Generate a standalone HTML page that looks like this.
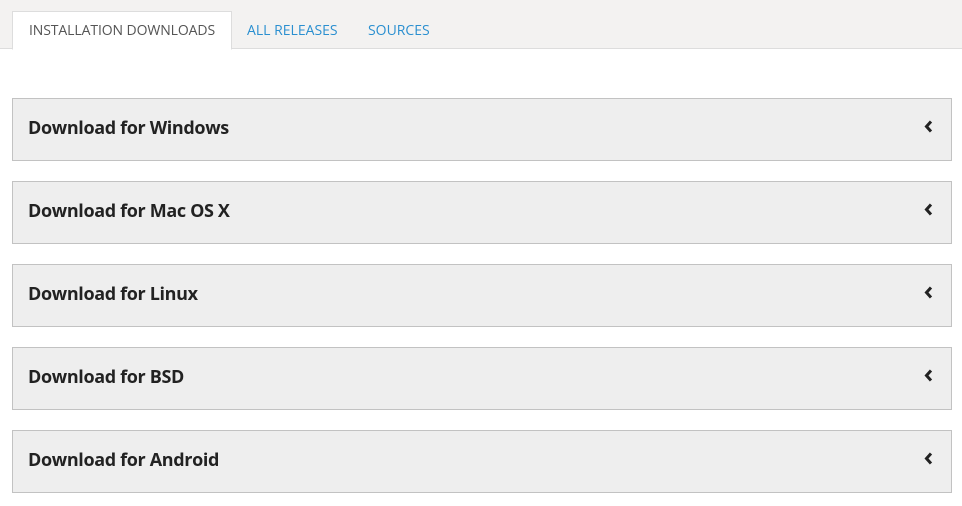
<!DOCTYPE html>
<html><head><style>
body{margin:0;background:#fff;font-family:"Open Sans","Liberation Sans",sans-serif;width:962px;height:506px;overflow:hidden}
.tabs{position:absolute;left:0;top:0;width:962px;height:48px;background:#f3f2f1;border-bottom:1px solid #ddd}
.tab{position:absolute;top:11px;height:37px;line-height:38px;font-size:14px;color:#2a8fd0}
.tab.active{left:12px;width:218px;background:#fff;border:1px solid #ddd;border-bottom:1px solid #fff;color:#555;text-align:center;top:11px;height:37px;letter-spacing:-0.1px}
.p{position:absolute;left:12px;width:938px;height:61px;background:#eee;border:1px solid #c2c2c2}
.p span{position:absolute;left:15px;top:0;line-height:58px;font-size:18px;font-weight:bold;color:#222;letter-spacing:-0.35px}
.p svg{position:absolute;left:910px;top:21px}
</style></head><body>
<div class="tabs">
<div class="tab active">INSTALLATION DOWNLOADS</div>
<div class="tab" style="left:247px;top:12px">ALL RELEASES</div>
<div class="tab" style="left:368px;top:12px">SOURCES</div>
</div>
<div class="p" style="top:98px"><span>Download for Windows</span><svg width="11" height="13"><path d="M8 1.5L3.5 6.5l4.5 5" stroke="#222" stroke-width="3" fill="none"/></svg></div>
<div class="p" style="top:181px"><span>Download for Mac OS X</span><svg width="11" height="13"><path d="M8 1.5L3.5 6.5l4.5 5" stroke="#222" stroke-width="3" fill="none"/></svg></div>
<div class="p" style="top:264px"><span>Download for Linux</span><svg width="11" height="13"><path d="M8 1.5L3.5 6.5l4.5 5" stroke="#222" stroke-width="3" fill="none"/></svg></div>
<div class="p" style="top:347px"><span>Download for BSD</span><svg width="11" height="13"><path d="M8 1.5L3.5 6.5l4.5 5" stroke="#222" stroke-width="3" fill="none"/></svg></div>
<div class="p" style="top:430px"><span>Download for Android</span><svg width="11" height="13"><path d="M8 1.5L3.5 6.5l4.5 5" stroke="#222" stroke-width="3" fill="none"/></svg></div>
</body></html>
